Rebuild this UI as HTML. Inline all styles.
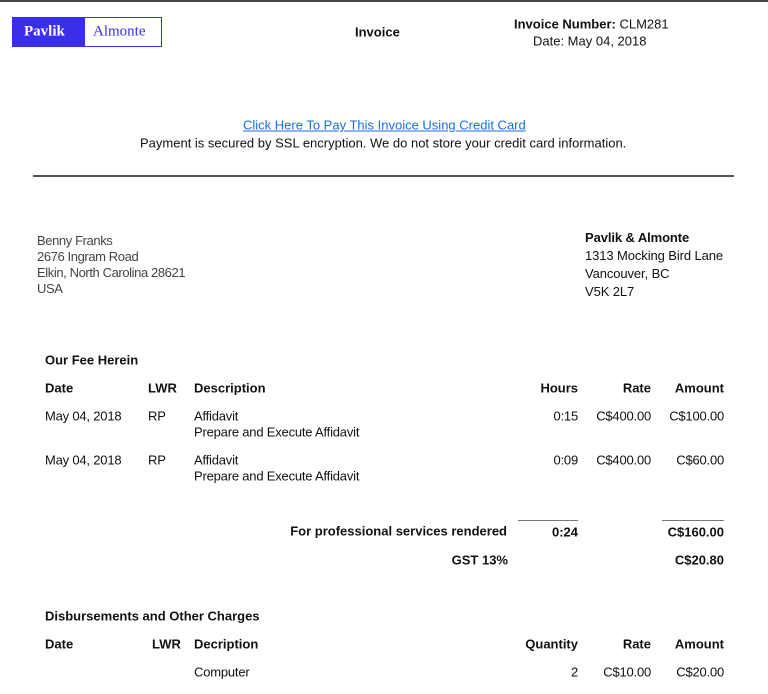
<!DOCTYPE html>
<html><head><meta charset="utf-8"><style>
body{margin:0;width:768px;height:694px;overflow:hidden;background:#fff;font-family:"Liberation Sans",Arial,sans-serif;color:#111;position:relative}
.a{position:absolute;white-space:nowrap;line-height:1;transform:translateY(-50%)}
.r{text-align:right}
.b{font-weight:bold;letter-spacing:0}
.s{font-size:13px}
.n{font-size:13px;letter-spacing:-0.2px}
.n.b{letter-spacing:0}
</style></head><body>
<div style="position:absolute;left:0;top:0;width:768px;height:2px;background:#444"></div>
<div style="position:absolute;left:12px;top:17px;width:148px;height:28px;border:1px solid #3b2ee8;"></div>
<div style="position:absolute;left:12px;top:17px;width:73px;height:30px;background:#3b2ee8"></div>
<div class="a" style="left:24px;top:32px;color:#fff;font-family:'Liberation Serif',serif;font-weight:bold;font-size:15px">Pavlik</div>
<div class="a" style="left:93px;top:32px;color:#3b2ee8;font-family:'Liberation Serif',serif;font-size:15px">Almonte</div>
<div class="a b s" style="left:355px;top:32px">Invoice</div>
<div class="a s" style="left:514px;top:24px"><b>Invoice Number:</b> CLM281</div>
<div class="a s" style="left:533px;top:41px">Date: May 04, 2018</div>
<div class="a s" style="left:243px;top:125px;color:#1a6fd8;text-decoration:underline">Click Here To Pay This Invoice Using Credit Card</div>
<div class="a s" style="left:140px;top:143px">Payment is secured by SSL encryption. We do not store your credit card information.</div>
<div style="position:absolute;left:33px;top:175px;width:701px;height:2px;background:#555"></div>
<div class="n" style="position:absolute;left:37px;top:233px;line-height:16px;color:#444;letter-spacing:-0.4px">Benny Franks<br>2676 Ingram Road<br>Elkin, North Carolina 28621<br>USA</div>
<div class="n" style="position:absolute;left:585px;top:229px;line-height:18px;letter-spacing:-0.1px"><b>Pavlik &amp; Almonte</b><br>1313 Mocking Bird Lane<br>Vancouver, BC<br>V5K 2L7</div>
<div class="a b n" style="left:45px;top:360px">Our Fee Herein</div>
<div class="a b n" style="left:45px;top:388px">Date</div>
<div class="a b n" style="left:148px;top:388px">LWR</div>
<div class="a b n" style="left:194px;top:388px">Description</div>
<div class="a b n r" style="right:190px;top:388px">Hours</div>
<div class="a b n r" style="right:117px;top:388px">Rate</div>
<div class="a b n r" style="right:44px;top:388px">Amount</div>
<div class="a n" style="left:45px;top:416px">May 04, 2018</div>
<div class="a n" style="left:148px;top:416px">RP</div>
<div class="a n" style="left:194px;top:416px">Affidavit</div>
<div class="a n" style="left:194px;top:432px">Prepare and Execute Affidavit</div>
<div class="a n r" style="right:190px;top:416px">0:15</div>
<div class="a n r" style="right:117px;top:416px">C$400.00</div>
<div class="a n r" style="right:44px;top:416px">C$100.00</div>
<div class="a n" style="left:45px;top:460px">May 04, 2018</div>
<div class="a n" style="left:148px;top:460px">RP</div>
<div class="a n" style="left:194px;top:460px">Affidavit</div>
<div class="a n" style="left:194px;top:476px">Prepare and Execute Affidavit</div>
<div class="a n r" style="right:190px;top:460px">0:09</div>
<div class="a n r" style="right:117px;top:460px">C$400.00</div>
<div class="a n r" style="right:44px;top:460px">C$60.00</div>
<div style="position:absolute;left:518px;top:520px;width:60px;height:1px;background:#777"></div>
<div style="position:absolute;left:662px;top:520px;width:62px;height:1px;background:#777"></div>
<div class="a b n r" style="right:261px;top:531px">For professional services rendered</div>
<div class="a b n r" style="right:190px;top:532px">0:24</div>
<div class="a b n r" style="right:44px;top:532px">C$160.00</div>
<div class="a b n r" style="right:260px;top:560px">GST 13%</div>
<div class="a b n r" style="right:44px;top:560px">C$20.80</div>
<div class="a b n" style="left:45px;top:616px">Disbursements and Other Charges</div>
<div class="a b n" style="left:45px;top:644px">Date</div>
<div class="a b n" style="left:152px;top:644px">LWR</div>
<div class="a b n" style="left:194px;top:644px">Decription</div>
<div class="a b n r" style="right:190px;top:644px">Quantity</div>
<div class="a b n r" style="right:117px;top:644px">Rate</div>
<div class="a b n r" style="right:44px;top:644px">Amount</div>
<div class="a n" style="left:194px;top:672px">Computer</div>
<div class="a n r" style="right:190px;top:672px">2</div>
<div class="a n r" style="right:117px;top:672px">C$10.00</div>
<div class="a n r" style="right:44px;top:672px">C$20.00</div>
</body></html>
